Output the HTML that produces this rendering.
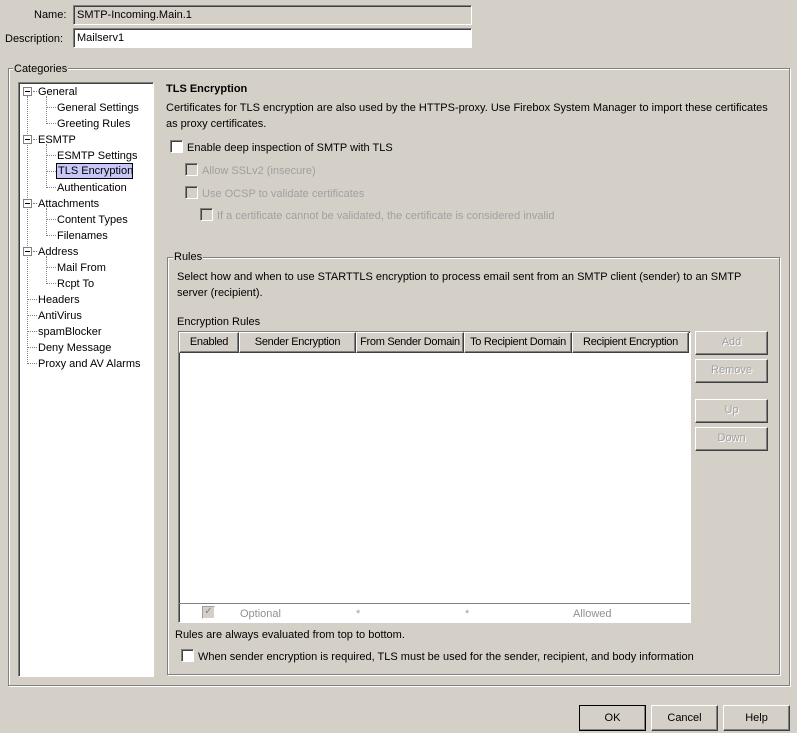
<!DOCTYPE html>
<html><head><style>
*{box-sizing:border-box;margin:0;padding:0}
body{width:797px;height:733px;background:#d4d0c8;font-family:"Liberation Sans",Arial,sans-serif;font-size:11px;color:#000;position:relative;overflow:hidden}
.a{position:absolute;white-space:nowrap;line-height:13px;padding-top:1px}
.inp{position:absolute;border:1px solid;border-color:#808080 #fff #fff #808080;box-shadow:inset 1px 1px 0 #404040;padding:3px 3px 0;line-height:13px}
.grp{position:absolute;border:1px solid #808080;box-shadow:1px 1px 0 #fff, inset 1px 1px 0 #fff}
.lg{position:absolute;background:#d4d0c8;padding:1px 1px 0;line-height:13px}
.cb{position:absolute;width:13px;height:13px;border:1px solid;border-color:#808080 #fff #fff #808080;box-shadow:inset 1px 1px 0 #404040;background:#fff}
.cb.d{background:#d4d0c8}
.g{color:#a0a0a0}
.btn{position:absolute;background:#d4d0c8;border:1px solid;border-color:#fff #404040 #404040 #fff;box-shadow:inset -1px -1px 0 #808080;text-align:center;line-height:21px}
.btn.d{color:#a0a0a0;text-shadow:1px 1px 0 #fff}
.exp{position:absolute;width:9px;height:9px;border:1px solid #808080;background:#fff}
.exp:after{content:"";position:absolute;left:1px;top:3px;width:5px;height:1px;background:#000}
.hl{position:absolute;border-top:1px dotted #808080;height:0}
.vl{position:absolute;border-left:1px dotted #808080;width:0}
.th{position:absolute;top:0;height:21px;border:1px solid;border-color:#fff #404040 #404040 #fff;box-shadow:inset -1px -1px 0 #808080;text-align:center;line-height:19px;background:#d4d0c8;white-space:nowrap;overflow:hidden;letter-spacing:-0.3px}
</style></head><body>
<div class="a" style="left:34px;top:8px">Name:</div>
<div class="inp" style="left:73px;top:5px;width:399px;height:20px;background:#d4d0c8">SMTP-Incoming.Main.1</div>
<div class="a" style="left:5px;top:32px">Description:</div>
<div class="inp" style="left:73px;top:28px;width:399px;height:20px;background:#fff">Mailserv1</div>

<div class="grp" style="left:8px;top:68px;width:782px;height:618px"></div>
<div class="lg" style="left:13px;top:62px">Categories</div>

<div class="inp" style="left:18px;top:82px;width:136px;height:595px;background:#fff;padding:0"></div>
<div class="vl" style="left:27px;top:96px;height:268px"></div>
<div class="vl" style="left:46px;top:96px;height:28px"></div>
<div class="vl" style="left:46px;top:144px;height:44px"></div>
<div class="vl" style="left:46px;top:208px;height:28px"></div>
<div class="vl" style="left:46px;top:256px;height:28px"></div>
<div class="exp" style="left:23px;top:87px"></div>
<div class="exp" style="left:23px;top:135px"></div>
<div class="exp" style="left:23px;top:199px"></div>
<div class="exp" style="left:23px;top:247px"></div>
<div class="hl" style="left:33px;top:91px;width:4px"></div>
<div class="hl" style="left:33px;top:139px;width:4px"></div>
<div class="hl" style="left:33px;top:203px;width:4px"></div>
<div class="hl" style="left:33px;top:251px;width:4px"></div>
<div class="hl" style="left:28px;top:299px;width:9px"></div>
<div class="hl" style="left:28px;top:315px;width:9px"></div>
<div class="hl" style="left:28px;top:331px;width:9px"></div>
<div class="hl" style="left:28px;top:347px;width:9px"></div>
<div class="hl" style="left:28px;top:363px;width:9px"></div>
<div class="hl" style="left:47px;top:107px;width:9px"></div>
<div class="hl" style="left:47px;top:123px;width:9px"></div>
<div class="hl" style="left:47px;top:155px;width:9px"></div>
<div class="hl" style="left:47px;top:171px;width:9px"></div>
<div class="hl" style="left:47px;top:187px;width:9px"></div>
<div class="hl" style="left:47px;top:219px;width:9px"></div>
<div class="hl" style="left:47px;top:235px;width:9px"></div>
<div class="hl" style="left:47px;top:267px;width:9px"></div>
<div class="hl" style="left:47px;top:283px;width:9px"></div>
<div class="a" style="left:38px;top:85px">General</div>
<div class="a" style="left:57px;top:101px">General Settings</div>
<div class="a" style="left:57px;top:117px">Greeting Rules</div>
<div class="a" style="left:38px;top:133px">ESMTP</div>
<div class="a" style="left:57px;top:149px">ESMTP Settings</div>
<div class="a" style="left:56px;top:163px;width:77px;height:16px;background:#c8c8f8;border:1px solid #000;padding-left:1px;line-height:14px;padding-top:0">TLS Encryption</div>
<div class="a" style="left:57px;top:181px">Authentication</div>
<div class="a" style="left:38px;top:197px">Attachments</div>
<div class="a" style="left:57px;top:213px">Content Types</div>
<div class="a" style="left:57px;top:229px">Filenames</div>
<div class="a" style="left:38px;top:245px">Address</div>
<div class="a" style="left:57px;top:261px">Mail From</div>
<div class="a" style="left:57px;top:277px">Rcpt To</div>
<div class="a" style="left:38px;top:293px">Headers</div>
<div class="a" style="left:38px;top:309px">AntiVirus</div>
<div class="a" style="left:38px;top:325px">spamBlocker</div>
<div class="a" style="left:38px;top:341px">Deny Message</div>
<div class="a" style="left:38px;top:357px">Proxy and AV Alarms</div>

<div class="a" style="left:166px;top:82px;font-weight:bold">TLS Encryption</div>
<div class="a" style="left:166px;top:101px">Certificates for TLS encryption are also used by the HTTPS-proxy. Use Firebox System Manager to import these certificates</div>
<div class="a" style="left:166px;top:117px">as proxy certificates.</div>
<div class="cb" style="left:170px;top:140px"></div>
<div class="a" style="left:187px;top:141px">Enable deep inspection of SMTP with TLS</div>
<div class="cb d" style="left:185px;top:163px"></div>
<div class="a g" style="left:202px;top:164px">Allow SSLv2 (insecure)</div>
<div class="cb d" style="left:185px;top:186px"></div>
<div class="a g" style="left:202px;top:187px">Use OCSP to validate certificates</div>
<div class="cb d" style="left:200px;top:208px"></div>
<div class="a g" style="left:217px;top:209px">If a certificate cannot be validated, the certificate is considered invalid</div>

<div class="grp" style="left:167px;top:257px;width:613px;height:418px"></div>
<div class="lg" style="left:173px;top:250px">Rules</div>
<div class="a" style="left:177px;top:270px">Select how and when to use STARTTLS encryption to process email sent from an SMTP client (sender) to an SMTP</div>
<div class="a" style="left:177px;top:286px">server (recipient).</div>
<div class="a" style="left:177px;top:315px">Encryption Rules</div>

<div class="inp" style="left:178px;top:331px;width:513px;height:292px;background:#fff;padding:0">
 <div class="th" style="left:0px;width:60px">Enabled</div>
 <div class="th" style="left:60px;width:117px">Sender Encryption</div>
 <div class="th" style="left:177px;width:108px">From Sender Domain</div>
 <div class="th" style="left:285px;width:108px">To Recipient Domain</div>
 <div class="th" style="left:393px;width:117px">Recipient Encryption</div>
 <div style="position:absolute;left:0;top:271px;width:511px;border-top:1px solid #808080"></div>
 <div class="cb d" style="left:23px;top:274px;box-shadow:none;border-color:#a0a0a0 #fff #fff #a0a0a0;font-size:10px;line-height:10px;color:#808080;text-align:center">✓</div>
 <div class="a g" style="left:61px;top:275px;color:#909090">Optional</div>
 <div class="a g" style="left:177px;top:275px">*</div>
 <div class="a g" style="left:286px;top:275px">*</div>
 <div class="a g" style="left:394px;top:275px;color:#909090">Allowed</div>
</div>

<div class="btn d" style="left:695px;top:331px;width:73px;height:24px">Add</div>
<div class="btn d" style="left:695px;top:359px;width:73px;height:24px">Remove</div>
<div class="btn d" style="left:695px;top:399px;width:73px;height:24px">Up</div>
<div class="btn d" style="left:695px;top:427px;width:73px;height:24px">Down</div>

<div class="a" style="left:175px;top:628px">Rules are always evaluated from top to bottom.</div>
<div class="cb" style="left:181px;top:649px"></div>
<div class="a" style="left:198px;top:650px">When sender encryption is required, TLS must be used for the sender, recipient, and body information</div>

<div class="btn" style="left:579px;top:705px;width:67px;height:26px;outline:1px solid #000;outline-offset:-1px;line-height:24px">OK</div>
<div class="btn" style="left:651px;top:705px;width:67px;height:26px;line-height:24px">Cancel</div>
<div class="btn" style="left:723px;top:705px;width:67px;height:26px;line-height:24px">Help</div>
</body></html>
